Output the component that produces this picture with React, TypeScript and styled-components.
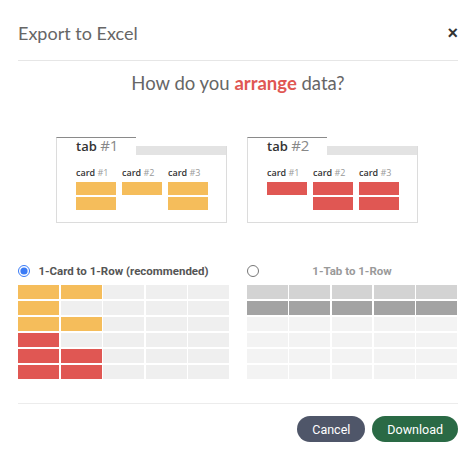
import styled, { createGlobalStyle } from "styled-components";

const GlobalStyle = createGlobalStyle`
	html, body {
		margin: 0;
		padding: 0;
		background: #ffffff;
	}
	* {
		box-sizing: border-box;
	}
`;

const YELLOW = "#f5bd5b";
const RED = "#e05753";
const EMPTY = "#efefef";

const Dialog = styled.div`
	width: 474px;
	height: 459px;
	padding: 0 16px 0 18px;
	background: #fff;
	font-family: "Lato", "Open Sans", sans-serif;
`;

const Header = styled.header`
	display: flex;
	justify-content: space-between;
	align-items: center;
	padding-top: 21px;
	padding-bottom: 15px;
	border-bottom: 1px solid #e6e6e6;
`;

const Title = styled.h2`
	margin: 0;
	font-size: 18px;
	line-height: 24px;
	font-weight: 400;
	color: #666;
`;

const Close = styled.button`
	border: none;
	background: none;
	padding: 0;
	font-family: "Liberation Sans", sans-serif;
	font-size: 18px;
	font-weight: 700;
	line-height: 24px;
	color: #333;
	cursor: pointer;
`;

const Question = styled.p`
	margin: 10px 0 0;
	text-align: center;
	font-size: 18.5px;
	line-height: 24px;
	color: #666;

	strong {
		color: ${RED};
		font-weight: 700;
	}
`;

const Diagrams = styled.section`
	display: flex;
	justify-content: center;
	gap: 20px;
	margin-top: 42px;
	padding-right: 2px;
`;

const Folder = styled.div`
	width: 171px;
	display: flex;
	flex-direction: column;
	font-family: "Open Sans", sans-serif;
`;

const FolderTop = styled.div`
	display: flex;
	height: 18px;
`;

const Tab = styled.div`
	width: 80px;
	border-top: 1.5px solid #8a8a8a;
	border-left: 1px solid #dcdcdc;
	padding-left: 19px;
	font-size: 13px;
	font-weight: 600;
	line-height: 15px;
	color: #333;

	span {
		font-size: 15px;
		font-weight: 400;
		color: #888;
	}
`;

const TabStrip = styled.div`
	flex: 1;
	margin-top: 9px;
	background: #e3e3e3;
	border-right: 1px solid #dcdcdc;
`;

const FolderBody = styled.div`
	display: flex;
	gap: 6px;
	height: 68px;
	padding: 13px 0 0 19px;
	border: 1px solid #dcdcdc;
	border-top: none;
`;

const Card = styled.div`
	width: 40px;
	display: flex;
	flex-direction: column;
	gap: 2px;
`;

const CardLabel = styled.div`
	font-size: 9px;
	font-weight: 600;
	line-height: 10px;
	margin-bottom: 2px;
	color: #333;
	white-space: nowrap;

	span {
		font-weight: 400;
		color: #999;
	}
`;

const Block = styled.div<{ $color: string }>`
	height: 13px;
	background: ${(p) => p.$color};
`;

const Options = styled.section`
	display: grid;
	grid-template-columns: 211px 210px;
	gap: 18px;
	margin-top: 40px;
`;

const Option = styled.label`
	display: flex;
	flex-direction: column;
	gap: 6px;
	cursor: pointer;
`;

const OptionHead = styled.div`
	display: grid;
	grid-template-columns: 16px 1fr 16px;
	align-items: center;
	height: 16px;
`;

const Radio = styled.input`
	margin: 0;
	width: 12px;
	height: 12px;
	accent-color: #3a7bf6;
`;

const OptionLabel = styled.span<{ $muted?: boolean }>`
	text-align: center;
	font-family: "Roboto", sans-serif;
	font-size: 11.5px;
	font-weight: 700;
	color: ${(p) => (p.$muted ? "#9a9a9a" : "#555")};
`;

const Sheet = styled.div`
	display: grid;
	grid-template-columns: repeat(5, 1fr);
	grid-auto-rows: 14px;
	gap: 2px 1.5px;
	height: 94px;
`;

const Cell = styled.div<{ $color: string }>`
	background: ${(p) => p.$color};
`;

const Footer = styled.footer`
	display: flex;
	justify-content: flex-end;
	gap: 7px;
	margin-top: 24px;
	padding-top: 12px;
	border-top: 1px solid #ececec;
`;

const Button = styled.button<{ $variant: "cancel" | "primary" }>`
	height: 26px;
	padding: 0 15px;
	border: none;
	border-radius: 13px;
	font-family: "Roboto", sans-serif;
	font-size: 12.5px;
	color: #fff;
	background: ${(p) => (p.$variant === "cancel" ? "#4f5669" : "#2a6a45")};
	cursor: pointer;
`;

const folders = [
	{ name: "#1", color: YELLOW, counts: [2, 1, 2] },
	{ name: "#2", color: RED, counts: [1, 2, 2] },
];

const cardRows = [
	[YELLOW, YELLOW],
	[YELLOW],
	[YELLOW, YELLOW],
	[RED],
	[RED, RED],
	[RED, RED],
];

const tabRows = ["#d3d3d3", "#a3a3a3", "#f3f3f3", "#f3f3f3", "#f3f3f3", "#f3f3f3"];

const App = () => {
	return (
		<Dialog>
			<GlobalStyle />
			<Header>
				<Title>Export to Excel</Title>
				<Close aria-label="Close">&times;</Close>
			</Header>

			<Question>
				How do you <strong>arrange</strong> data?
			</Question>

			<Diagrams>
				{folders.map((folder) => (
					<Folder key={folder.name}>
						<FolderTop>
							<Tab>
								tab <span>{folder.name}</span>
							</Tab>
							<TabStrip />
						</FolderTop>
						<FolderBody>
							{folder.counts.map((count, i) => (
								<Card key={i}>
									<CardLabel>
										card <span>#{i + 1}</span>
									</CardLabel>
									{Array.from({ length: count }).map((_, j) => (
										<Block key={j} $color={folder.color} />
									))}
								</Card>
							))}
						</FolderBody>
					</Folder>
				))}
			</Diagrams>

			<Options>
				<Option>
					<OptionHead>
						<Radio type="radio" name="arrange" defaultChecked />
						<OptionLabel>1-Card to 1-Row (recommended)</OptionLabel>
					</OptionHead>
					<Sheet>
						{cardRows.flatMap((row, r) =>
							Array.from({ length: 5 }).map((_, c) => <Cell key={`${r}-${c}`} $color={row[c] ?? EMPTY} />)
						)}
					</Sheet>
				</Option>
				<Option>
					<OptionHead>
						<Radio type="radio" name="arrange" />
						<OptionLabel $muted>1-Tab to 1-Row</OptionLabel>
					</OptionHead>
					<Sheet>
						{tabRows.flatMap((color, r) =>
							Array.from({ length: 5 }).map((_, c) => <Cell key={`${r}-${c}`} $color={color} />)
						)}
					</Sheet>
				</Option>
			</Options>

			<Footer>
				<Button $variant="cancel">Cancel</Button>
				<Button $variant="primary">Download</Button>
			</Footer>
		</Dialog>
	);
};

export default App;
